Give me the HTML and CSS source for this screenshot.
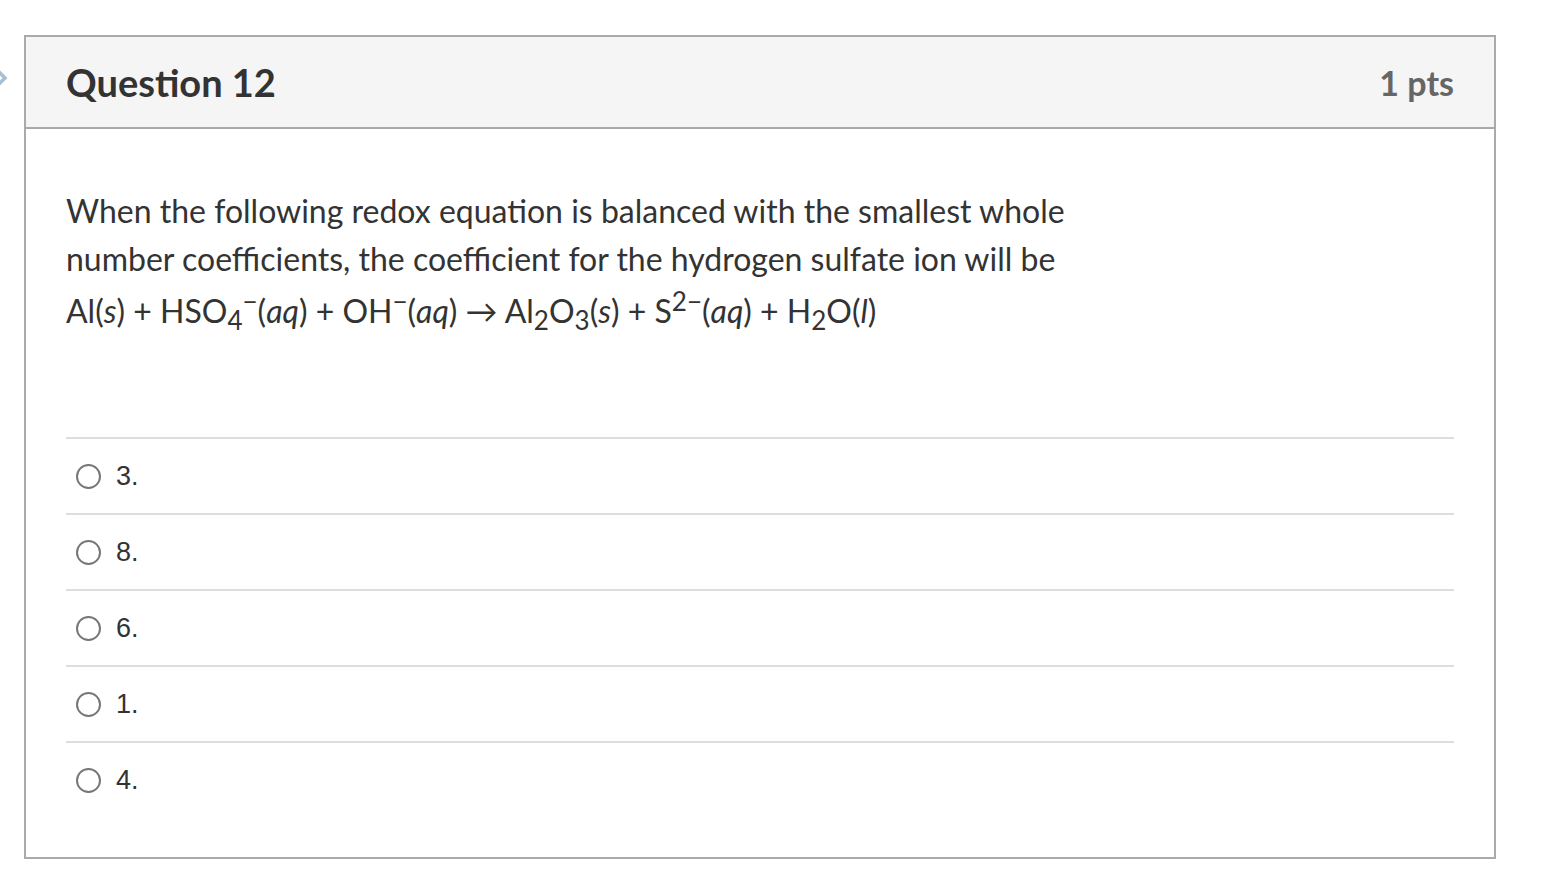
FILE: index.html
```html
<!DOCTYPE html>
<html>
<head>
<meta charset="utf-8">
<link rel="stylesheet" href="styles.css">
</head>
<body>
<svg class="flag" width="12" height="40" viewBox="0 0 12 40"><path d="M-8 6 L5 19 L-8 32" fill="none" stroke="#a6bfd2" stroke-width="3.5"/></svg>
<div class="page">
  <div class="question">
    <div class="header">
      <h2 class="title">Question 12</h2>
      <div class="pts">1 pts</div>
    </div>
    <div class="body">
      <div class="text">
        <p>When the following redox equation is balanced with the smallest whole number coefficients, the coefficient for the hydrogen sulfate ion will be</p>
        <p class="eq">Al(<i>s</i>) + HSO<sub>4</sub><sup>−</sup>(<i>aq</i>) + OH<sup>−</sup>(<i>aq</i>) → Al<sub>2</sub>O<sub>3</sub>(<i>s</i>) + S<sup>2−</sup>(<i>aq</i>) + H<sub>2</sub>O(<i>l</i>)</p>
      </div>
      <div class="answers">
        <div class="answer"><span class="radio"></span><span class="label">3.</span></div>
        <div class="answer"><span class="radio"></span><span class="label">8.</span></div>
        <div class="answer"><span class="radio"></span><span class="label">6.</span></div>
        <div class="answer"><span class="radio"></span><span class="label">1.</span></div>
        <div class="answer"><span class="radio"></span><span class="label">4.</span></div>
      </div>
    </div>
  </div>
</div>
</body>
</html>
```
FILE: styles.css
```css
html, body {
  margin: 0;
  padding: 0;
  background: #ffffff;
}
body {
  font-family: Lato, "Liberation Sans", sans-serif;
  color: #333333;
  position: relative;
}
.flag {
  position: absolute;
  left: 0;
  top: 59px;
}
.page {
  padding: 35px 0 0 24px;
}
.question {
  width: 1468px;
  border: 2px solid #aaaaaa;
}
.header {
  height: 90px;
  background: #f5f5f5;
  border-bottom: 2px solid #aaaaaa;
  display: flex;
  align-items: center;
  justify-content: space-between;
  padding: 0 40px;
}
.title {
  margin: 0;
  font-size: 38px;
  font-weight: 700;
  color: #333333;
}
.pts {
  font-size: 34px;
  font-weight: 700;
  color: #666666;
}
.body {
  padding: 58px 40px 40px;
}
.text {
  font-size: 32px;
  line-height: 48px;
}
.text p {
  margin: 0;
  width: 1020px;
}
.text .eq {
  margin-top: 4px;
}
.text sub, .text sup {
  font-size: 26px;
  line-height: 0;
}
.answers {
  margin-top: 102px;
  border-top: 2px solid #dddddd;
}
.answer {
  height: 74px;
  display: flex;
  align-items: center;
  border-bottom: 2px solid #dddddd;
  font-family: "Liberation Sans", Arial, sans-serif;
  font-size: 27px;
  color: #333333;
}
.answer:last-child {
  border-bottom: none;
}
.radio {
  width: 21px;
  height: 21px;
  border: 2px solid #777777;
  border-radius: 50%;
  margin-left: 10px;
  margin-right: 15px;
  flex: none;
}
```
